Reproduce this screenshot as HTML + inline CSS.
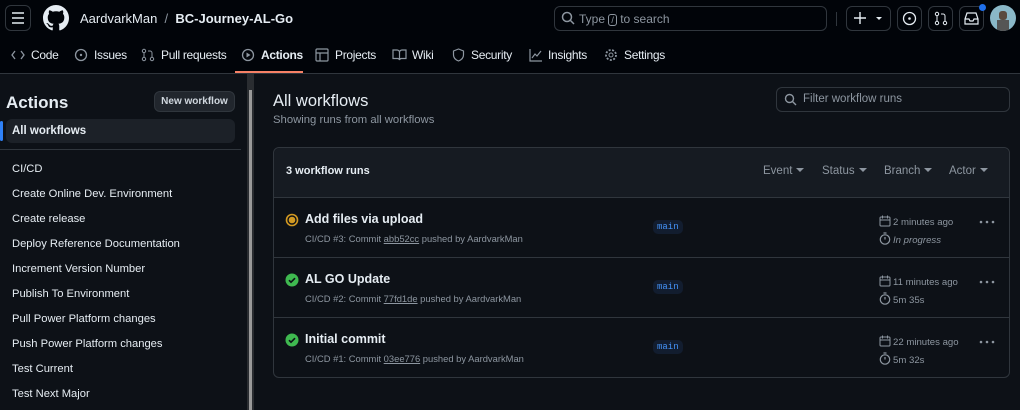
<!DOCTYPE html><html><head><style>
*{box-sizing:border-box;margin:0;padding:0}
body{width:1020px;height:410px;overflow:hidden;background:#0d1117;font-family:"Liberation Sans",sans-serif;color:#e6edf3;position:relative}
.a{position:absolute}
.hdr{left:0;top:0;width:1020px;height:74px;background:#010409;border-bottom:1px solid #30363d}
.btn{border:1px solid #30363d;border-radius:6px}
.tab{top:48px;font-size:12px;letter-spacing:-0.3px;color:#e6edf3}
.sb{font-size:11.2px;color:#e6edf3;left:12px}
.muted{color:#8d96a0}
.row{left:273px;width:737px;height:60px;border-top:1px solid #30363d}
.t{position:absolute;left:32px;top:14px;font-size:12.5px;font-weight:bold}
.s{position:absolute;left:32px;top:35px;font-size:9.4px;color:#8d96a0}
.s u{text-decoration:underline}
.br{position:absolute;left:380px;top:22px;font:9px "Liberation Mono",monospace;color:#4493f8;background:#121d2f;padding:2px 4px;border-radius:5px}
.tm{position:absolute;left:620px;top:16px;font-size:9.6px;color:#8d96a0;line-height:18px}
.tm i{font-style:italic}
.ic1{position:absolute;left:606px;top:17px}
.ic2{position:absolute;left:606px;top:34px}
.dots{position:absolute;left:706px;top:22px}
.dd{font-size:11.5px;top:165px}
.dd svg{margin-left:4px;vertical-align:middle}
</style></head><body>
<div class="a hdr"></div>
<div class="a btn" style="left:5px;top:5px;width:26px;height:26px"></div>
<svg class="a" style="left:11px;top:12px" width="14" height="12"><path d="M1 1h12M1 6h12M1 11h12" stroke="#e6edf3" stroke-width="1.5"/></svg>
<svg class="a" style="left:43px;top:5px" width="26" height="26" viewBox="0 0 16 16"><path fill="#e6edf3" d="M8 0C3.58 0 0 3.58 0 8c0 3.54 2.29 6.53 5.47 7.59.4.07.55-.17.55-.38 0-.19-.01-.82-.01-1.49-2.01.37-2.53-.49-2.69-.94-.09-.23-.48-.94-.82-1.13-.28-.15-.68-.52-.01-.53.63-.01 1.08.58 1.23.82.72 1.21 1.87.87 2.33.66.07-.52.28-.87.51-1.07-1.78-.2-3.64-.89-3.64-3.95 0-.87.31-1.59.82-2.15-.08-.2-.36-1.02.08-2.12 0 0 .67-.21 2.2.82.64-.18 1.32-.27 2-.27.68 0 1.36.09 2 .27 1.53-1.04 2.2-.82 2.2-.82.44 1.1.16 1.92.08 2.12.51.56.82 1.27.82 2.15 0 3.07-1.87 3.75-3.65 3.95.29.25.54.73.54 1.48 0 1.07-.01 1.93-.01 2.2 0 .21.15.46.55.38A8.013 8.013 0 0016 8c0-4.42-3.58-8-8-8z"/></svg>
<div class="a" style="left:80px;top:11px;font-size:13px">AardvarkMan <span class="muted">&nbsp;/&nbsp;</span> <b>BC-Journey-AL-Go</b></div>
<div class="a btn" style="left:554px;top:6px;width:273px;height:25px"></div>
<svg class="a" style="left:561px;top:11px" width="14" height="14"><circle cx="6" cy="6" r="4.5" stroke="#8d96a0" stroke-width="1.5" fill="none"/><path d="M9.5 9.5l3.5 3.5" stroke="#8d96a0" stroke-width="1.5"/></svg>
<div class="a muted" style="left:579px;top:12px;font-size:12px">Type <span style="border:1px solid #8d96a0;border-radius:3px;padding:0 2px;font-size:9px">/</span> to search</div>
<div class="a" style="left:836px;top:12px;width:1px;height:14px;background:#30363d"></div>
<div class="a btn" style="left:846px;top:6px;width:45px;height:25px"></div>
<svg class="a" style="left:853px;top:11px" width="32" height="14"><path d="M7 1v12M1 7h12" stroke="#e6edf3" stroke-width="1.4"/><path d="M23 6h6l-3 3z" fill="#e6edf3"/></svg>
<div class="a btn" style="left:897px;top:6px;width:25px;height:25px"></div>
<svg class="a" style="left:902px;top:11px" width="15" height="15"><circle cx="7.5" cy="7.5" r="6" stroke="#e6edf3" stroke-width="1.3" fill="none"/><circle cx="7.5" cy="7.5" r="1.3" fill="#e6edf3"/></svg>
<div class="a btn" style="left:928px;top:6px;width:25px;height:25px"></div>
<svg class="a" style="left:934px;top:11px" width="14" height="15"><circle cx="3" cy="3" r="1.7" stroke="#e6edf3" fill="none"/><circle cx="3" cy="12" r="1.7" stroke="#e6edf3" fill="none"/><circle cx="11" cy="12" r="1.7" stroke="#e6edf3" fill="none"/><path d="M3 5v5M11 10V5a2 2 0 0 0-2-2H7" stroke="#e6edf3" fill="none"/></svg>
<div class="a btn" style="left:959px;top:6px;width:25px;height:25px"></div>
<svg class="a" style="left:964px;top:12px" width="15" height="13"><path d="M1 7l2-6h9l2 6v5H1zM1 7h4l1 2h3l1-2h4" stroke="#e6edf3" stroke-width="1.2" fill="none"/></svg>
<div class="a" style="left:979px;top:4px;width:7px;height:7px;border-radius:50%;background:#1f6feb"></div>
<div class="a" style="left:990px;top:5px;width:26px;height:26px;border-radius:50%;background:#8ab8c8;overflow:hidden"><div class="a" style="left:9px;top:6px;width:8px;height:9px;background:#5a4a3e;border-radius:3px"></div><div class="a" style="left:7px;top:15px;width:12px;height:11px;background:#555"></div></div>

<svg class="a" style="left:11px;top:50px" width="14" height="10"><path d="M4 1L1 5l3 4M10 1l3 4-3 4" stroke="#8d96a0" stroke-width="1.3" fill="none"/></svg>
<div class="a tab" style="left:31px">Code</div>
<svg class="a" style="left:74px;top:48px" width="14" height="14"><circle cx="7" cy="7" r="5.5" stroke="#8d96a0" stroke-width="1.3" fill="none"/><circle cx="7" cy="7" r="1.2" fill="#8d96a0"/></svg>
<div class="a tab" style="left:94px">Issues</div>
<svg class="a" style="left:141px;top:48px" width="14" height="14"><circle cx="3" cy="3" r="1.7" stroke="#8d96a0" fill="none"/><circle cx="3" cy="11" r="1.7" stroke="#8d96a0" fill="none"/><circle cx="11" cy="11" r="1.7" stroke="#8d96a0" fill="none"/><path d="M3 5v4M11 9V5a2 2 0 0 0-2-2H7" stroke="#8d96a0" fill="none"/></svg>
<div class="a tab" style="left:161px">Pull requests</div>
<svg class="a" style="left:241px;top:48px" width="14" height="14"><circle cx="7" cy="7" r="5.5" stroke="#8d96a0" stroke-width="1.3" fill="none"/><path d="M5.5 4.5v5l4-2.5z" fill="#8d96a0"/></svg>
<div class="a tab" style="left:261px;font-weight:bold">Actions</div>
<div class="a" style="left:235px;top:71px;width:68px;height:2px;background:#f78166"></div>
<svg class="a" style="left:315px;top:48px" width="14" height="14"><rect x="1" y="1" width="12" height="12" rx="1" stroke="#8d96a0" stroke-width="1.2" fill="none"/><path d="M1 5h12M5 5v8" stroke="#8d96a0" stroke-width="1.2"/></svg>
<div class="a tab" style="left:335px">Projects</div>
<svg class="a" style="left:392px;top:49px" width="15" height="12"><path d="M1 1h4a2.5 2.5 0 0 1 2.5 2.5V11a2 2 0 0 0-2-1.5H1zM14 1h-4a2.5 2.5 0 0 0-2.5 2.5V11a2 2 0 0 1 2-1.5H14z" stroke="#8d96a0" stroke-width="1.2" fill="none"/></svg>
<div class="a tab" style="left:412px">Wiki</div>
<svg class="a" style="left:452px;top:48px" width="13" height="14"><path d="M6.5 1L1.5 3v4c0 3 2.5 5 5 6 2.5-1 5-3 5-6V3z" stroke="#8d96a0" stroke-width="1.2" fill="none"/></svg>
<div class="a tab" style="left:471px">Security</div>
<svg class="a" style="left:529px;top:48px" width="14" height="14"><path d="M1 1v12h12M3 10l3-4 2 2 4-5" stroke="#8d96a0" stroke-width="1.2" fill="none"/></svg>
<div class="a tab" style="left:548px">Insights</div>
<svg class="a" style="left:604px;top:48px" width="14" height="14"><circle cx="7" cy="7" r="2" stroke="#8d96a0" fill="none"/><circle cx="7" cy="7" r="5" stroke="#8d96a0" stroke-width="1.8" stroke-dasharray="2 1.5" fill="none"/></svg>
<div class="a tab" style="left:624px">Settings</div>

<div class="a" style="left:247px;top:74px;width:7px;height:336px;background:#2a2d31"></div>
<div class="a" style="left:249px;top:90px;width:3px;height:320px;background:#9a9a9a"></div>
<div class="a" style="left:6px;top:93px;font-size:17px;font-weight:bold">Actions</div>
<div class="a btn" style="left:154px;top:91px;width:81px;height:21px;background:#21262d;font-size:10px;font-weight:bold;text-align:center;line-height:19px;color:#d0d7de">New workflow</div>
<div class="a" style="left:6px;top:119px;width:229px;height:24px;background:#1c2128;border-radius:6px;font-size:11.5px;font-weight:bold;padding:6px 0 0 6px">All workflows</div>
<div class="a" style="left:0;top:121px;width:3px;height:20px;background:#2f81f7;border-radius:2px"></div>
<div class="a" style="left:0;top:149px;width:241px;height:1px;background:#30363d"></div>
<div class="a sb" style="top:163px">CI/CD</div>
<div class="a sb" style="top:188px">Create Online Dev. Environment</div>
<div class="a sb" style="top:213px">Create release</div>
<div class="a sb" style="top:238px">Deploy Reference Documentation</div>
<div class="a sb" style="top:263px">Increment Version Number</div>
<div class="a sb" style="top:288px">Publish To Environment</div>
<div class="a sb" style="top:313px">Pull Power Platform changes</div>
<div class="a sb" style="top:338px">Push Power Platform changes</div>
<div class="a sb" style="top:363px">Test Current</div>
<div class="a sb" style="top:388px">Test Next Major</div>

<div class="a" style="left:273px;top:92px;font-size:16.5px">All workflows</div>
<div class="a muted" style="left:273px;top:114px;font-size:11.3px">Showing runs from all workflows</div>
<div class="a btn" style="left:776px;top:87px;width:234px;height:25px"></div>
<svg class="a" style="left:784px;top:93px" width="13" height="13"><circle cx="5.5" cy="5.5" r="4" stroke="#8d96a0" stroke-width="1.4" fill="none"/><path d="M8.5 8.5l3.5 3.5" stroke="#8d96a0" stroke-width="1.4"/></svg>
<div class="a muted" style="left:803px;top:93px;font-size:11.5px">Filter workflow runs</div>

<div class="a" style="left:273px;top:147px;width:737px;height:231px;border:1px solid #30363d;border-radius:6px"></div>
<div class="a" style="left:274px;top:148px;width:735px;height:49px;background:#161b22;border-radius:6px 6px 0 0"></div>
<div class="a" style="left:286px;top:165px;font-size:11px;font-weight:bold">3 workflow runs</div>
<div class="a muted dd" style="left:763px">Event<svg width="8" height="5"><path d="M0 0h8L4 4z" fill="#8d96a0"/></svg></div>
<div class="a muted dd" style="left:822px">Status<svg width="8" height="5"><path d="M0 0h8L4 4z" fill="#8d96a0"/></svg></div>
<div class="a muted dd" style="left:884px">Branch<svg width="8" height="5"><path d="M0 0h8L4 4z" fill="#8d96a0"/></svg></div>
<div class="a muted dd" style="left:949px">Actor<svg width="8" height="5"><path d="M0 0h8L4 4z" fill="#8d96a0"/></svg></div>

<div class="a row" style="top:197px">
<svg class="a" style="left:12px;top:15px" width="14" height="14"><circle cx="7" cy="7" r="5.5" stroke="#d29922" stroke-width="1.6" fill="none"/><circle cx="7" cy="7" r="3.3" fill="#d29922"/></svg>
<div class="t">Add files via upload</div><div class="s">CI/CD #3: Commit <u>abb52cc</u> pushed by AardvarkMan</div>
<div class="br">main</div>
<svg class="ic1" width="12" height="12"><rect x="1" y="2" width="10" height="9" rx="1" stroke="#8d96a0" fill="none"/><path d="M1 5h10M3.5 0.5v3M8.5 0.5v3" stroke="#8d96a0"/></svg>
<svg class="ic2" width="12" height="13"><circle cx="6" cy="7.5" r="4.7" stroke="#8d96a0" stroke-width="1.2" fill="none"/><path d="M6 7.5V5M4.5 1h3" stroke="#8d96a0" stroke-width="1.2"/></svg>
<div class="tm">2 minutes ago<br><i>In progress</i></div>
<svg class="dots" width="16" height="4"><g fill="#8d96a0"><circle cx="2" cy="2" r="1.3"/><circle cx="8" cy="2" r="1.3"/><circle cx="14" cy="2" r="1.3"/></g></svg></div>
<div class="a row" style="top:257px">
<svg class="a" style="left:12px;top:15px" width="14" height="14"><circle cx="7" cy="7" r="6.5" fill="#3fb950"/><path d="M4 7.2l2 2 4-4" stroke="#0d1117" stroke-width="1.6" fill="none"/></svg>
<div class="t">AL GO Update</div><div class="s">CI/CD #2: Commit <u>77fd1de</u> pushed by AardvarkMan</div>
<div class="br">main</div>
<svg class="ic1" width="12" height="12"><rect x="1" y="2" width="10" height="9" rx="1" stroke="#8d96a0" fill="none"/><path d="M1 5h10M3.5 0.5v3M8.5 0.5v3" stroke="#8d96a0"/></svg>
<svg class="ic2" width="12" height="13"><circle cx="6" cy="7.5" r="4.7" stroke="#8d96a0" stroke-width="1.2" fill="none"/><path d="M6 7.5V5M4.5 1h3" stroke="#8d96a0" stroke-width="1.2"/></svg>
<div class="tm">11 minutes ago<br>5m 35s</div>
<svg class="dots" width="16" height="4"><g fill="#8d96a0"><circle cx="2" cy="2" r="1.3"/><circle cx="8" cy="2" r="1.3"/><circle cx="14" cy="2" r="1.3"/></g></svg></div>
<div class="a row" style="top:317px">
<svg class="a" style="left:12px;top:15px" width="14" height="14"><circle cx="7" cy="7" r="6.5" fill="#3fb950"/><path d="M4 7.2l2 2 4-4" stroke="#0d1117" stroke-width="1.6" fill="none"/></svg>
<div class="t">Initial commit</div><div class="s">CI/CD #1: Commit <u>03ee776</u> pushed by AardvarkMan</div>
<div class="br">main</div>
<svg class="ic1" width="12" height="12"><rect x="1" y="2" width="10" height="9" rx="1" stroke="#8d96a0" fill="none"/><path d="M1 5h10M3.5 0.5v3M8.5 0.5v3" stroke="#8d96a0"/></svg>
<svg class="ic2" width="12" height="13"><circle cx="6" cy="7.5" r="4.7" stroke="#8d96a0" stroke-width="1.2" fill="none"/><path d="M6 7.5V5M4.5 1h3" stroke="#8d96a0" stroke-width="1.2"/></svg>
<div class="tm">22 minutes ago<br>5m 32s</div>
<svg class="dots" width="16" height="4"><g fill="#8d96a0"><circle cx="2" cy="2" r="1.3"/><circle cx="8" cy="2" r="1.3"/><circle cx="14" cy="2" r="1.3"/></g></svg></div>
</body></html>
